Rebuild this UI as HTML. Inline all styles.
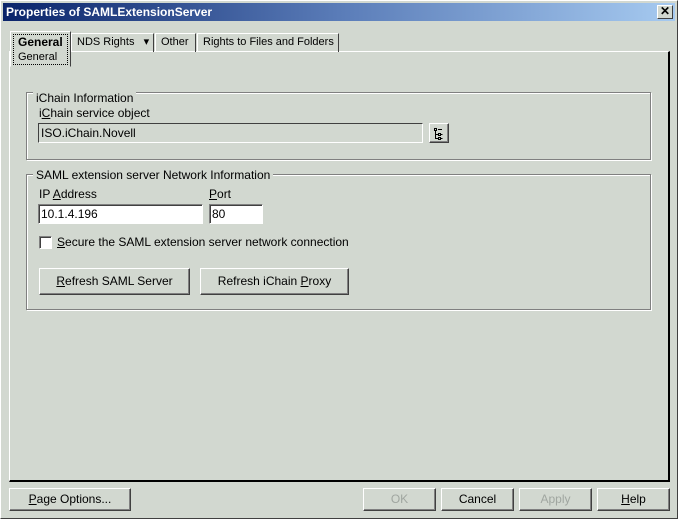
<!DOCTYPE html>
<html><head><style>
*{box-sizing:border-box}
body{margin:0;width:678px;height:519px;background:#d2d8d0;font-family:"Liberation Sans",sans-serif;font-size:12px;color:#000;position:relative;overflow:hidden}
.a{position:absolute;white-space:nowrap}
.win{left:0;top:0;width:678px;height:519px;border:1px solid;border-color:#fff #404040 #404040 #fff}
.title{left:3px;top:3px;width:672px;height:18px;background:linear-gradient(90deg,#0a246a,#5a7cb8 50%,#a6caf0);color:#fff;font-weight:bold;font-size:12px;line-height:18px;padding-left:3px}
.close{left:657px;top:5px;width:16px;height:14px;background:#d2d8d0;border:1px solid;border-color:#fff #404040 #404040 #fff;font-size:12px;line-height:11px;text-align:center;font-weight:bold;color:#000}
.raise{border:1px solid;border-color:#fff #404040 #404040 #fff;box-shadow:inset -1px -1px 0 #808080}
.sunk{background:#fff;border:1px solid;border-color:#808080 #fff #fff #808080;box-shadow:inset 1px 1px 0 #404040}
.tab{top:33px;height:19px;border:1px solid;border-bottom:none;border-color:#fff #404040 #fff #fff;line-height:17px;padding-left:5px;font-size:11px}
.grp{border:1px solid #808080;box-shadow:1px 1px 0 #fff,inset 1px 1px 0 #fff}
.lg{background:#d2d8d0;padding:0 3px;line-height:14px}
.btn{text-align:center;line-height:21px}
.dis{color:#a0a6a0}
u{text-decoration:underline}
</style></head><body>
<div class="a win"></div>
<div class="a title">Properties of SAMLExtensionServer</div>
<div class="a close">✕</div>
<!-- panel -->
<div class="a" style="left:9px;top:51px;width:661px;height:431px;border:1px solid;border-color:#fff #000 #000 #fff;border-right-width:2px;border-bottom-width:2px"></div>
<div class="a tab" style="left:71px;width:83px">NDS Rights&nbsp;&nbsp; ▾</div>
<div class="a tab" style="left:155px;width:41px">Other</div>
<div class="a tab" style="left:197px;width:142px">Rights to Files and Folders</div>
<div class="a" style="left:10px;top:31px;width:61px;height:36px;background:#d2d8d0;border:1px solid;border-color:#fff #404040 #d2d8d0 #fff"></div>
<div class="a" style="left:13px;top:34px;width:55px;height:31px;border:1px dotted #000;line-height:14px;padding-left:4px;font-size:11px"><b style="font-size:12px">General</b><br>General</div>
<div class="a grp" style="left:26px;top:92px;width:625px;height:68px"></div>
<div class="a lg" style="left:33px;top:91px">iChain Information</div>
<div class="a" style="left:39px;top:106px">i<u>C</u>hain service object</div>
<div class="a" style="left:38px;top:123px;width:385px;height:20px;border:1px solid;border-color:#404040 #fff #fff #404040;padding-left:2px;line-height:18px">ISO.iChain.Novell</div>
<div class="a raise" style="left:429px;top:123px;width:20px;height:20px">
<svg width="18" height="18" style="position:absolute;left:0;top:0"><path d="M4.5 4.5h2v2h-2zM8 5.5h4M5.5 7v8M6 10.5h2M8.5 9.5h2v2h-2zM11 10.5h1.5M6 14.5h2M8.5 13.5h2v2h-2zM11 14.5h1.5" stroke="#000" fill="none"/></svg></div>
<div class="a grp" style="left:26px;top:174px;width:625px;height:136px"></div>
<div class="a lg" style="left:33px;top:168px">SAML extension server Network Information</div>
<div class="a" style="left:39px;top:187px">IP <u>A</u>ddress</div>
<div class="a" style="left:209px;top:187px"><u>P</u>ort</div>
<div class="a sunk" style="left:38px;top:204px;width:165px;height:20px;padding-left:2px;line-height:18px">10.1.4.196</div>
<div class="a sunk" style="left:209px;top:204px;width:54px;height:20px;padding-left:2px;line-height:18px">80</div>
<div class="a sunk" style="left:39px;top:236px;width:13px;height:13px"></div>
<div class="a" style="left:57px;top:235px"><u>S</u>ecure the SAML extension server network connection</div>
<div class="a raise btn" style="left:39px;top:268px;width:151px;height:27px;line-height:25px"><u>R</u>efresh SAML Server</div>
<div class="a raise btn" style="left:200px;top:268px;width:149px;height:27px;line-height:25px">Refresh iChain <u>P</u>roxy</div>
<div class="a raise btn" style="left:9px;top:488px;width:122px;height:23px"><u>P</u>age Options...</div>
<div class="a raise btn dis" style="left:363px;top:488px;width:73px;height:23px">OK</div>
<div class="a raise btn" style="left:441px;top:488px;width:73px;height:23px">Cancel</div>
<div class="a raise btn dis" style="left:519px;top:488px;width:73px;height:23px">Apply</div>
<div class="a raise btn" style="left:597px;top:488px;width:73px;height:23px"><u>H</u>elp</div>
</body></html>
